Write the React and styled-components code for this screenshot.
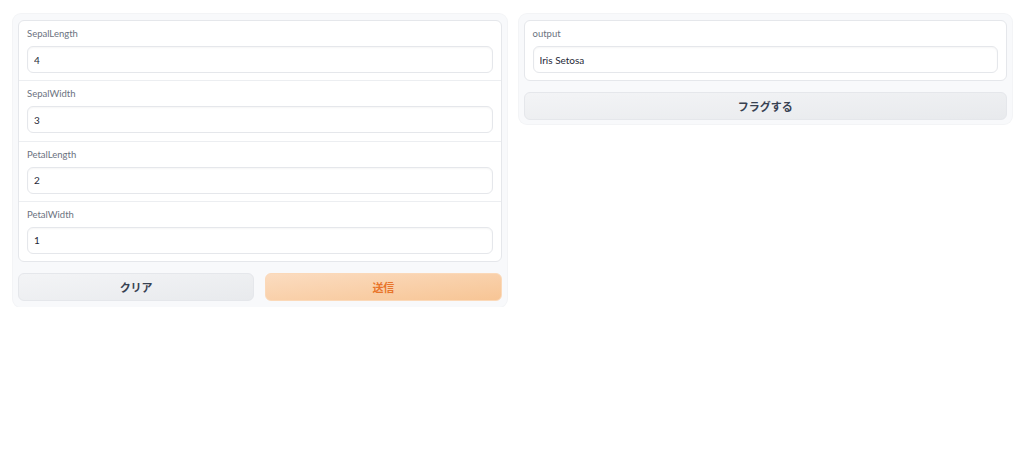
import React from "react";
import styled, { createGlobalStyle } from "styled-components";

const GlobalStyle = createGlobalStyle`
  body {
    margin: 0;
    background: #ffffff;
    font-family: "Lato", "Noto Sans CJK JP", sans-serif;
  }
`;

const inputs = [
  { label: "SepalLength", value: "4" },
  { label: "SepalWidth", value: "3" },
  { label: "PetalLength", value: "2" },
  { label: "PetalWidth", value: "1" },
];

const App = () => {
  return (
    <Page>
      <GlobalStyle />
      <Column>
        <Block>
          {inputs.map((item) => (
            <Field key={item.label}>
              <Label>{item.label}</Label>
              <Input defaultValue={item.value} />
            </Field>
          ))}
        </Block>
        <ButtonRow>
          <Button>クリア</Button>
          <Button primary>送信</Button>
        </ButtonRow>
      </Column>
      <Column tight>
        <Block>
          <Field>
            <Label>output</Label>
            <Input defaultValue="Iris Setosa" readOnly />
          </Field>
        </Block>
        <Button>フラグする</Button>
      </Column>
    </Page>
  );
};

const Page = styled.div`
  display: flex;
  align-items: flex-start;
  gap: 12px;
  padding: 14px 12px 0 13px;
`;

const Column = styled.div`
  flex: 1;
  display: flex;
  flex-direction: column;
  gap: ${(p) => (p.tight ? "10.5px" : "11px")};
  padding: 6px 5px ${(p) => (p.tight ? "4px" : "6px")} 5px;
  background: #f8f9fb;
  border-radius: 8px;
  box-shadow: 0 0 0 1px #f3f4f6;
`;

const Block = styled.div`
  background: #ffffff;
  border: 1px solid #e5e7eb;
  border-radius: 6px;
  display: flex;
  flex-direction: column;
`;

const Field = styled.div`
  display: flex;
  flex-direction: column;
  padding: 6px 8px 7.25px 8px;
  & + & {
    border-top: 1px solid #eceef1;
  }
`;

const Label = styled.span`
  font-size: 9.5px;
  line-height: 14px;
  color: #6b7280;
  margin-bottom: 5px;
`;

const Input = styled.input`
  box-sizing: border-box;
  height: 27px;
  width: 100%;
  padding: 0 6px;
  border: 1px solid #e5e7eb;
  border-radius: 6px;
  font-family: "Lato", "Noto Sans CJK JP", sans-serif;
  font-size: 10px;
  color: #1f2937;
  background: #ffffff;
  box-shadow: inset 0 1px 2px rgba(0, 0, 0, 0.04);
  outline: none;
`;

const ButtonRow = styled.div`
  display: grid;
  grid-template-columns: 1fr 1fr;
  gap: 11px;
`;

const Button = styled.button`
  height: 28px;
  border-radius: 6px;
  font-family: "Lato", "Noto Sans CJK JP", sans-serif;
  font-size: 11px;
  font-weight: 700;
  cursor: pointer;
  border: 1px solid ${(p) => (p.primary ? "#fbd9b9" : "#e5e7eb")};
  color: ${(p) => (p.primary ? "#e8742a" : "#374151")};
  background: ${(p) =>
    p.primary
      ? "linear-gradient(to bottom right, #fbdcc0, #f7c595)"
      : "linear-gradient(to bottom right, #f3f4f6, #e8eaed)"};
`;

export default App;
